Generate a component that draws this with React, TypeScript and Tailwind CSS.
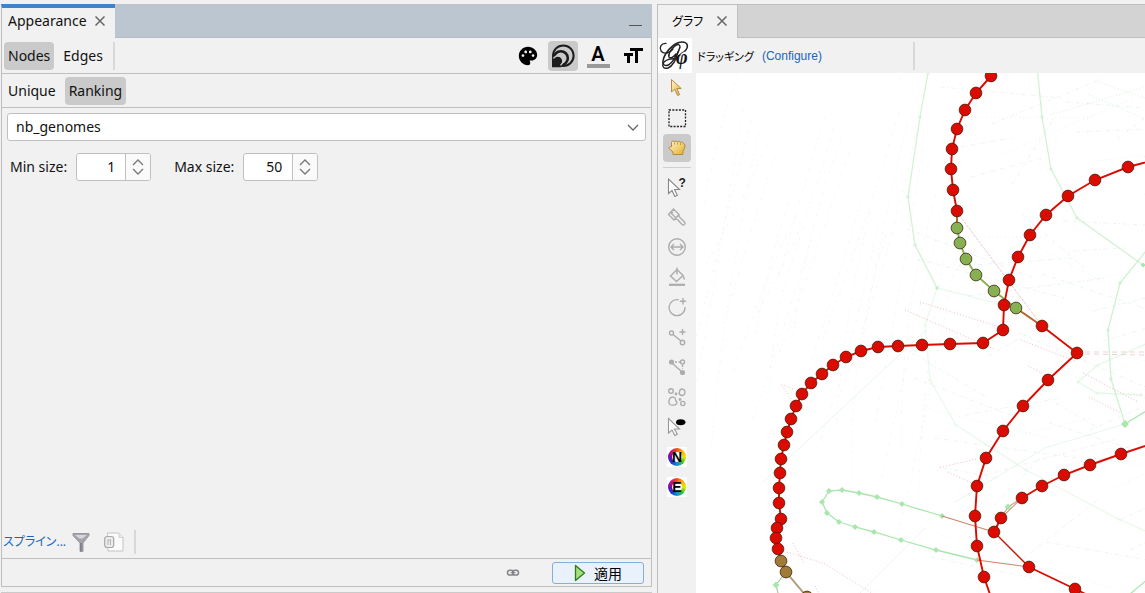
import { useState } from "react";
import type { ReactNode } from "react";
import { MdFormatSize, MdPalette } from "react-icons/md";

type Point = [number, number];

const RED = "#dc0b00";
const GREEN = "#85b150";
const BROWN = "#a17a35";
const PALE = "#a9e6ae";

const topRed: Point[] = [[991, 76], [976, 93], [965, 110], [957, 129], [952, 149], [951, 169], [953, 190], [957, 211]];
const topGreen: Point[] = [[957, 228], [960, 243], [966, 259], [976, 275], [994, 291], [1016, 308]];
const middleRed: Point[] = [
  [1042, 326], [1077, 353], [1048, 380], [1023, 406], [1003, 431], [986, 458],
  [977, 486], [975, 516], [977, 546], [984, 577], [993, 603],
];
const arcRed: Point[] = [
  [1162, 158], [1128, 167], [1095, 180], [1068, 196], [1046, 215], [1030, 235], [1018, 257], [1009, 280],
  [1004, 305], [1003, 330], [983, 343], [950, 344], [922, 345], [898, 346], [878, 347], [861, 351],
  [846, 357], [833, 365], [822, 374], [811, 383], [802, 394], [796, 406], [791, 419], [787, 432],
  [784, 445], [781, 459], [780, 473], [779, 488], [779, 503], [781, 519], [777, 528], [776, 538], [778, 549],
];
const tailBrown: Point[] = [[781, 561], [786, 572], [807, 597]];
const lowerRed: Point[] = [[1160, 441], [1121, 454], [1090, 465], [1064, 475], [1042, 486], [1022, 498]];
const lowerRedEnd: Point[] = [[1001, 518], [994, 532]];
const cornerRed: Point[] = [[1029, 567], [1075, 589], [1100, 601]];

const loopGreen: Point[] = [
  [942, 516], [902, 504], [877, 497], [859, 493], [842, 490], [829, 491], [822, 502], [827, 513],
  [839, 522], [855, 527], [874, 532], [901, 540], [936, 550], [977, 560],
];

const paleChains: { points: Point[]; opacity: number }[] = [
  { points: [[928, 73], [920, 117], [908, 197], [915, 245], [937, 288]], opacity: 0.5 },
  { points: [[937, 288], [925, 325], [930, 380], [956, 425], [1026, 470], [1118, 519], [1150, 533]], opacity: 0.22 },
  { points: [[1037, 66], [1042, 117], [1051, 169], [1077, 218], [1143, 265]], opacity: 0.5 },
  { points: [[1150, 246], [1120, 283], [1108, 330], [1111, 379], [1125, 424]], opacity: 0.55 },
  { points: [[1150, 342], [1098, 365], [1078, 382], [1097, 393], [1141, 395]], opacity: 0.28 },
  { points: [[1143, 265], [1160, 270]], opacity: 0.6 },
  { points: [[937, 288], [1004, 305]], opacity: 0.2 },
];

const redDotted: Point[][] = [
  [[905, 310], [994, 349]], [[920, 302], [1003, 328]], [[1021, 340], [1075, 361]], [[1028, 366], [1050, 377]],
  [[1083, 373], [1138, 402]], [[1089, 397], [1121, 413]], [[976, 459], [938, 468]], [[948, 472], [974, 484]],
  [[793, 389], [781, 384], [791, 399]], [[787, 552], [823, 563], [872, 593]], [[793, 543], [804, 563]], [[815, 586], [820, 596]],
];

// far away edges that only show up as faint hairlines
const leftHairlines = Array.from({ length: 26 }, (_, i) => {
  const x = 704 + ((i * 37) % 230);
  const y = 73 + ((i * 83) % 170);
  const len = 130 + ((i * 29) % 190);
  return `M${x + 34} ${y}q-${22 + (i % 5) * 4} ${len / 2} -${34 + (i % 4) * 14} ${len}`;
});
const rightHairlines = Array.from({ length: 56 }, (_, i) => {
  const x = 900 + ((i * 71) % 240);
  const y = 80 + ((i * 97) % 500);
  const dx = 40 + ((i * 31) % 110);
  const dy = ((i * 53) % 130) - 72;
  return `M${x} ${y}l${dx} ${dy}`;
});

const toPath = (points: Point[]) => "M" + points.map((p) => p.join(" ")).join("L");

function Chain({ points, color, edge }: { points: Point[]; color: string; edge?: string }) {
  return (
    <g>
      <path d={toPath(points)} fill="none" stroke={edge || color} strokeWidth="1.9" />
      {points.map(([x, y]) => (
        <circle key={`${x}-${y}`} cx={x} cy={y} r="5.9" fill={color} stroke="#3b1d10" strokeOpacity="0.75" strokeWidth="1" />
      ))}
    </g>
  );
}

function Diamond({ x, y, r }: { x: number; y: number; r: number }) {
  return <path d={`M${x - r} ${y}l${r} -${r}l${r} ${r}l-${r} ${r}z`} fill={PALE} />;
}

function GraphCanvas() {
  return (
    <svg className="block h-full w-full" role="img" aria-label="Graph">
      <g transform="translate(-696 -73)">
        <g fill="none" strokeWidth="1">
          {leftHairlines.map((d) => (
            <path key={d} d={d} stroke="#dfe9e4" strokeOpacity="0.35" strokeDasharray="3 3 1 4" />
          ))}
          {rightHairlines.map((d, i) => (
            <path key={d} d={d} stroke={i % 6 === 0 ? "#c5ebce" : "#d5e9dd"} strokeOpacity="0.45" strokeDasharray={i % 3 === 0 ? "1 3" : "4 2 1 3"} />
          ))}
          <path d="M1088 94L1145 119M1050 115L1145 87M1098 82L1145 98" stroke="#bfeac6" strokeOpacity="0.6" strokeDasharray="1 2" />
          <path d="M955 502L1045 448L1125 424M860 593L925 528M762 483L925 331" stroke="#d8f0e2" strokeOpacity="0.6" />
          {redDotted.map((points) => (
            <path key={toPath(points)} d={toPath(points)} stroke="#eba6a6" strokeOpacity="0.75" strokeDasharray="1 2" />
          ))}
          <path d="M957 212L1042 326" stroke="#eecaca" strokeDasharray="3 1" />
          <path d="M1085 352L1145 352M1085 354L1145 355" stroke="#f0d3d3" strokeDasharray="5 4" />
        </g>
        {paleChains.map(({ points, opacity }) => (
          <g key={toPath(points)} opacity={opacity}>
            <path d={toPath(points)} fill="none" stroke={PALE} strokeWidth="1.3" />
            {points.map(([x, y]) => (
              <Diamond key={`${x}-${y}`} x={x} y={y} r={2} />
            ))}
          </g>
        ))}
        <path d="M1125 424L1148 410M1130 594L1148 579" stroke={PALE} strokeWidth="1.3" />
        <Diamond x={1125} y={424} r={4} />
        <Diamond x={1143} y={265} r={2.5} />

        <path d={toPath(loopGreen)} fill="none" stroke={PALE} strokeWidth="1.3" />
        {loopGreen.map(([x, y]) => (
          <Diamond key={`${x}-${y}`} x={x} y={y} r={3} />
        ))}
        <g fill="none" strokeWidth="1.1">
          <path d="M942 516L994 532M977 560L1029 567" stroke="#cf8468" />
          <path d="M1022 498L1001 518M1022 498L1008 507L1001 518" stroke="#cf9a86" />
          <path d="M786 572L776 585L779 597" stroke="#a9c592" />
        </g>
        <Diamond x={1008} y={507} r={3.5} />
        <Diamond x={776} y={585} r={3.5} />

        <path d="M994 532L1029 567" stroke={RED} strokeWidth="1.3" />
        <path d="M957 211L957 228" stroke="#b5652b" strokeWidth="1.9" />
        <path d="M1016 308L1042 326" stroke="#b5652b" strokeWidth="1.9" />
        <path d="M778 549L781 561" stroke={BROWN} strokeWidth="1.9" />
        <Chain points={tailBrown} color={BROWN} edge="#b39a78" />
        <Chain points={topGreen} color={GREEN} />
        <Chain points={topRed} color={RED} />
        <Chain points={middleRed} color={RED} />
        <Chain points={arcRed} color={RED} />
        <Chain points={lowerRed} color={RED} />
        <Chain points={lowerRedEnd} color={RED} />
        <Chain points={cornerRed} color={RED} />
      </g>
    </svg>
  );
}

function CloseIcon() {
  return (
    <svg viewBox="0 0 10 10" className="size-2.5" fill="none" stroke="#666" strokeWidth="1.5">
      <path d="M.5.5l9 9M9.5.5l-9 9" />
    </svg>
  );
}

function SizeIcon() {
  return (
    <svg viewBox="0 0 24 24" className="size-6">
      <circle cx="12.3" cy="11.7" r="10.3" fill="none" stroke="#1c1c1c" strokeWidth="2" />
      <circle cx="9.8" cy="14.2" r="7" fill="none" stroke="#1c1c1c" strokeWidth="2.6" />
      <circle cx="6.8" cy="17" r="5" fill="#1c1c1c" stroke="#cacaca" strokeWidth="1.4" />
      <path d="M1 14v9.200h9.200L9 20 4 15z" fill="#1c1c1c" />
    </svg>
  );
}

function TextColorIcon() {
  return (
    <span className="flex w-[23px] flex-col items-center border-b-4 border-[#9a9a9a] font-['Roboto',sans-serif] text-[20px] leading-5 font-semibold text-black">
      A
    </span>
  );
}

function GephiLogo() {
  return (
    <svg viewBox="0 0 34 35" className="h-[35px] w-[34px] shrink-0 bg-white" role="img" aria-label="Gephi">
      <g fill="none" stroke="#222" strokeLinecap="round">
        <path d="M8 5.500C3 5 1 10 3 13c3 4 9 2 12-2" strokeWidth="1.300" />
        <path d="M27 13c4-4 3-9-3-9C15 4 6 16 5 23c-1 5 4 6 8 2 4-4 8-12 9-16 0-3-2-3-5-1-4 3-7 8-6 11 1 2 5 0 7-3" strokeWidth="1.500" />
        <path d="M20 14c-2 8-5 14-10 16-4 1-6-1-5-4 1-4 8-6 13-5" strokeWidth="1.400" />
        <path d="M27 13c-4 2-8 5-9 9" strokeWidth="1" />
      </g>
      <text x="18" y="26" fontFamily="Liberation Serif" fontStyle="italic" fontWeight="bold" fontSize="20" fill="#111">φ</text>
    </svg>
  );
}

function GoldGradient({ id }: { id: string }) {
  return (
    <linearGradient id={id} x1="0" y1="0" x2="1" y2="1">
      <stop offset="0" stopColor="#fff6cf" />
      <stop offset="1" stopColor="#e3af22" />
    </linearGradient>
  );
}

function ColorRing({ letter }: { letter: string }) {
  return (
    <span className="flex size-5 items-center justify-center bg-white">
      <span className="flex size-[18px] items-center justify-center rounded-full bg-[conic-gradient(#ff4a12,#ffb000,#e8e800,#3ac02c,#1090e0,#2030d0,#6a12b0,#d01080,#ff4a12)]">
        <span className="flex size-2.5 items-center justify-center rounded-full bg-white font-['Liberation_Sans'] text-[14px] leading-3 font-bold text-black">
          {letter}
        </span>
      </span>
    </span>
  );
}

function Glyph({ children }: { children: ReactNode }) {
  return (
    <svg viewBox="0 0 20 20" className="size-5" fill="none" stroke="#acacac" strokeWidth="1.4">
      {children}
    </svg>
  );
}

const tools: { name: string; icon: ReactNode; separated?: boolean }[] = [
  {
    name: "Direct selection",
    icon: (
      <Glyph>
        <defs><GoldGradient id="gold-cursor" /></defs>
        <path d="M4.500 1.500V14l3.200-2.800 2.900 6.300 2-.9-2.800-6.100h4.400z" fill="url(#gold-cursor)" stroke="#b08a50" strokeWidth="1" />
      </Glyph>
    ),
  },
  {
    name: "Rectangle selection",
    icon: <Glyph><path d="M2 2h16.500v16.500H2z" stroke="#222" strokeWidth="1.300" strokeDasharray="2 1.300" /></Glyph>,
  },
  {
    name: "Drag",
    icon: (
      <Glyph>
        <defs><GoldGradient id="gold-hand" /></defs>
        <path
          d="M4.500 4.500c.3-2 2.600-2 3-.3.5-1.500 2.700-1.500 3.100 0 .5-1.300 2.600-1.200 3 .3.7-1 2.800-.5 2.900 1.200.9 0 1.500.8 1.400 2-.2 2.500-1 4-2 5.800v3H6v-2.500C4.500 13 3.500 11.800 2.300 10.500c-.8-1 .2-2.300 2.300-1.700z"
          fill="url(#gold-hand)" stroke="#b3873c" strokeWidth="1"
        />
        <path d="M7.500 4.500v2M10.600 4.500v2M13.600 5v2" stroke="#b3873c" strokeWidth=".8" />
      </Glyph>
    ),
  },
  {
    name: "Edit node attributes",
    separated: true,
    icon: (
      <Glyph>
        <path d="M1.500 2v14.500l3.500-3 2.800 6 2.500-1.200-2.800-5.800h5z" fill="#fff" stroke="#888" strokeWidth="1.100" />
        <text x="11.500" y="10" fill="#222" stroke="none" fontFamily="Liberation Sans" fontWeight="bold" fontSize="12">?</text>
      </Glyph>
    ),
  },
  {
    name: "Painter",
    icon: <Glyph><path d="M1.500 7.500l5-5.500 5.500 5.500-5 5.500zM3.500 5.500l5.500 5.500M4 7l2-2M12 7.500c-.5 2 0 2.500 1.500 3.500l4 4c1.500 2-.8 4-2.500 2.500l-4-4.500c-1-1-2-1.500-4 0" /></Glyph>,
  },
  {
    name: "Sizer",
    icon: <Glyph><circle cx="10" cy="10" r="8.300" /><path d="M4 10h12M7 7l-3 3 3 3M13 7l3 3-3 3" /></Glyph>,
  },
  {
    name: "Brush",
    icon: <Glyph><path d="M10 2.500L3.500 9l6 5.500L16 8.500zM10 .5v7M16 8.500l1.500 4" /><path d="M2 17.800h16" strokeWidth="2.200" /></Glyph>,
  },
  {
    name: "Node pencil",
    icon: <Glyph><path d="M11.500 2.800A8 8 0 1 0 18 10M16 1v6.500M12.800 4.200h6.400" /></Glyph>,
  },
  {
    name: "Edge pencil",
    icon: <Glyph><circle cx="4.500" cy="6" r="2" /><circle cx="15.500" cy="15.500" r="2.200" /><path d="M6 7.500l8 6.500M15.500 2v6M12.500 5h6" /></Glyph>,
  },
  {
    name: "Shortest path",
    icon: (
      <Glyph>
        <circle cx="4.500" cy="5" r="2.600" fill="#acacac" stroke="none" />
        <circle cx="15.500" cy="15.500" r="2.600" fill="#acacac" stroke="none" />
        <circle cx="15.500" cy="5" r="2" />
        <path d="M5 6l10 9" /><path d="M8 5h5M15.500 8v4" strokeDasharray="2 1.500" />
      </Glyph>
    ),
  },
  {
    name: "Heat map",
    icon: (
      <Glyph>
        <circle cx="4" cy="4" r="2.300" /><circle cx="15.800" cy="16.500" r="2.100" />
        <circle cx="9" cy="7" r=".7" /><circle cx="13" cy="12.500" r=".7" />
        <path d="M12.500 5c0-3 2.500-3.500 3.800-2.500C18 3 18.500 5 17.500 7s-3 1.500-4 1S11.500 6.500 12.500 5zM4 10.500c2-1 5 0 4.500 2 0 1.500 2 2.500 1.300 4-1 2-5.500 2-7 1-1.800-1.500-1-6 1.200-7z" />
      </Glyph>
    ),
  },
  {
    name: "Label edition",
    icon: (
      <Glyph>
        <path d="M1.500 1.500v14.500l3.500-3 2.800 5.500 2.500-1.200-2.800-5.300h5z" fill="#fff" stroke="#999" strokeWidth="1.100" />
        <path d="M9 5.300c0-2 1.500-3 4.500-3s5 1 5 3-2 3-5 3-4.500-1-4.500-3z" fill="#000" stroke="none" />
      </Glyph>
    ),
  },
  { name: "Node colors", icon: <ColorRing letter="N" /> },
  { name: "Edge colors", icon: <ColorRing letter="E" /> },
];

function Spinner({ id, label, value, onChange }: { id: string; label: string; value: number; onChange: (v: number) => void }) {
  return (
    <div className="flex items-center gap-[9px]">
      <label htmlFor={id}>{label}</label>
      <div className="flex h-7 w-[75px] overflow-hidden rounded-[3px] border border-[#c0c0c0] bg-white">
        <input
          id={id}
          inputMode="numeric"
          value={value}
          onChange={(e) => onChange(Number(e.target.value) || 0)}
          className="w-0 flex-1 pr-2.5 text-right outline-none"
        />
        <div className="flex w-[25px] flex-col items-center border-l border-[#c0c0c0] bg-[#fafafa]">
          <button aria-label={`Increase ${label}`} onClick={() => onChange(value + 1)} className="flex flex-1 items-end pb-px">
            <svg viewBox="0 0 12 7" className="h-[7px] w-3" fill="none" stroke="#777" strokeWidth="1.3"><path d="M1 6l5-5 5 5" /></svg>
          </button>
          <button aria-label={`Decrease ${label}`} onClick={() => onChange(value - 1)} className="flex flex-1 items-start pt-px">
            <svg viewBox="0 0 12 7" className="h-[7px] w-3" fill="none" stroke="#777" strokeWidth="1.3"><path d="M1 1l5 5 5-5" /></svg>
          </button>
        </div>
      </div>
    </div>
  );
}

function AppearancePanel() {
  const [min, setMin] = useState(1);
  const [max, setMax] = useState(50);

  return (
    <section className="flex flex-1 flex-col border-b border-[#bfbfbf]">
      {/* Tab bar */}
      <div className="flex h-[34px] shrink-0">
        <div className="flex w-[114px] items-center gap-2 border-t-4 border-l border-t-[#4083c9] border-l-[#bfbfbf] pb-1 pl-1.5">
          <span>Appearance</span>
          <button aria-label="Close Appearance"><CloseIcon /></button>
        </div>
        <div className="flex flex-1 items-center justify-end border-b border-[#b4bcc4] bg-[#bbc6d1] pr-2.5">
          <button aria-label="Minimize" className="flex h-4 w-[13px] items-end">
            <span className="mb-[3px] h-px w-full bg-[#555]" />
          </button>
        </div>
      </div>

      <div className="flex flex-1 flex-col border-x border-[#bfbfbf]">
        {/* Element and attribute kind */}
        <div className="flex h-9 items-center border-b border-[#bfbfbf] pr-[3px] pl-0.5">
          <button className="h-7 rounded bg-[#cacaca] px-1">Nodes</button>
          <button className="ml-[5px] h-7 px-1">Edges</button>
          <div className="ml-1.5 h-7 w-0.5 bg-[#d8d8d8]" />
          <div className="ml-auto flex gap-[5px] text-black">
            <button aria-label="Color" className="flex size-[30px] items-center justify-center"><MdPalette className="size-[22px]" /></button>
            <button aria-label="Size" className="flex size-[30px] items-center justify-center rounded bg-[#cacaca]"><SizeIcon /></button>
            <button aria-label="Label color" className="flex size-[30px] items-center justify-center"><TextColorIcon /></button>
            <button aria-label="Label size" className="flex size-[30px] items-center justify-center"><MdFormatSize className="size-6" /></button>
          </div>
        </div>

        <div className="flex h-[34px] items-center border-b border-[#bfbfbf] pl-0.5">
          <button className="h-7 px-1">Unique</button>
          <button className="ml-[5px] h-7 rounded bg-[#cacaca] px-1">Ranking</button>
        </div>

        <div className="relative mx-[5px] mt-[5px]">
          <select aria-label="Attribute" className="h-7 w-full appearance-none rounded-[3px] border border-[#c0c0c0] bg-white px-2 outline-none">
            <option>nb_genomes</option>
          </select>
          <svg viewBox="0 0 12 7" className="pointer-events-none absolute top-[11px] right-[7px] h-[7px] w-3" fill="none" stroke="#666" strokeWidth="1.3">
            <path d="M1 1l5 5 5-5" />
          </svg>
        </div>

        <div className="mt-3 flex gap-[23px] pl-2">
          <Spinner id="min-size" label="Min size:" value={min} onChange={setMin} />
          <Spinner id="max-size" label="Max size:" value={max} onChange={setMax} />
        </div>

        {/* Footer */}
        <div className="mt-auto flex h-[34px] items-center border-b border-[#bfbfbf] px-px">
          <a href="#spline" className="font-['Noto_Sans','Noto_Sans_CJK_JP',sans-serif] text-[12px] text-[#1b67b4] [font-feature-settings:'palt']">
            スプライン...
          </a>
          <button aria-label="Filter" className="ml-[5px]">
            <svg viewBox="0 0 20 20" className="size-5">
              <path d="M2 1.500h16v2L12 11v8.500H9V11L2 3.500z" fill="#a4a4aa" stroke="#8c8c94" strokeWidth=".8" />
              <path d="M4 3h12l-4.500 3.500h-3z" fill="#d6d6dc" />
              <path d="M10 11v8" stroke="#67676f" strokeWidth="1" />
            </svg>
          </button>
          <button aria-label="Local scale" className="ml-[13px]">
            <svg viewBox="0 0 20 20" className="size-5">
              <path d="M3.500 1h11.500l4 4.500V19h-15z" fill="#fbfbfb" stroke="#c4c4c4" />
              <path d="M15 1v4.500h4" fill="#eee" stroke="#d0d0d0" />
              <rect x=".7" y="4.500" width="9" height="11" rx="2.500" fill="#ececec" stroke="#a8a8a8" strokeWidth="1.200" />
              <path d="M3.500 8h3.500M4 8v5M6.500 8v5" stroke="#b2b2b2" fill="none" />
            </svg>
          </button>
          <div className="ml-2.5 h-6 w-0.5 bg-[#d8d8d8]" />
        </div>
        <div className="flex h-[27px] items-center justify-end pr-[7px]">
          <button aria-label="Auto transformation" className="mr-8">
            <svg viewBox="0 0 14 8" className="h-2 w-3.5" fill="none" stroke="#85858b" strokeWidth="1.500">
              <rect x="1.500" y="1.300" width="6" height="4.800" rx="2.400" />
              <rect x="6.500" y="1.300" width="6" height="4.800" rx="2.400" />
              <path d="M4.500 3.700h5" strokeWidth="1" />
            </svg>
          </button>
          <button className="flex h-[22px] w-[92px] items-center justify-center gap-2 rounded-[3px] border border-[#86aed8] bg-[#e9f1fb]">
            <svg viewBox="0 0 12 18" className="h-[18px] w-3">
              <path d="M1.500 1.500v15L10.500 9z" fill="#a6e07c" stroke="#2c7c1c" strokeWidth="1.300" strokeLinejoin="round" />
            </svg>
            <span className="font-['Noto_Sans_CJK_JP',sans-serif] text-[14px] leading-5 text-black">適用</span>
          </button>
        </div>
      </div>
    </section>
  );
}

function GraphPanel() {
  const [active, setActive] = useState("Drag");

  return (
    <section className="flex min-w-0 flex-col border-l border-[#bfbfbf]">
      {/* Tab bar */}
      <div className="flex h-[34px] shrink-0 border-t border-[#bfbfbf]">
        <div className="flex w-20 items-center gap-3.5 border-r border-[#bfbfbf] pb-px pl-3.5">
          <span className="font-['Noto_Sans_CJK_JP',sans-serif] text-[12px] text-black [font-feature-settings:'palt']">グラフ</span>
          <button aria-label="Close グラフ"><CloseIcon /></button>
        </div>
        <div className="flex-1 border-b border-[#bfbfbf] bg-[#d3d3d3]" />
      </div>

      <div className="flex h-[35px] shrink-0 items-center">
        <GephiLogo />
        <div className="flex w-[221px] items-center gap-2 pl-[5px]">
          <span className="font-['Noto_Sans_CJK_JP',sans-serif] text-[11px] text-black [font-feature-settings:'palt']">ドラッギング</span>
          <a href="#configure" className="font-['Liberation_Sans',sans-serif] text-[12px] text-[#2166b8]">(Configure)</a>
        </div>
        <div className="h-7 w-0.5 bg-[#d8d8d8]" />
      </div>

      <div className="flex min-h-0 flex-1">
        {/* Toolbar */}
        <div className="flex w-[38px] shrink-0 flex-col gap-0.5 px-[5px] pt-px">
          {tools.map((tool) => (
            <div key={tool.name} className="flex flex-col gap-0.5">
              {tool.separated && <div className="my-[3px] h-px bg-[#cfcfcf]" />}
              <button
                aria-label={tool.name}
                onClick={() => setActive(tool.name)}
                className={`flex size-7 items-center justify-center rounded ${active === tool.name ? "bg-[#cacaca]" : ""}`}
              >
                {tool.icon}
              </button>
            </div>
          ))}
        </div>
        <div className="min-w-0 flex-1 overflow-hidden bg-white">
          <GraphCanvas />
        </div>
      </div>
    </section>
  );
}

export default function App() {
  return (
    <div className="grid h-screen grid-cols-[651fr_488fr] gap-[5px] bg-[#f1f1f1] pt-1 pl-px font-['Noto_Sans','Noto_Sans_CJK_JP',sans-serif] text-[14px] leading-5 text-[#111]">
      <div className="flex min-w-0 flex-col gap-[5px]">
        <AppearancePanel />
        <div className="h-px shrink-0 bg-[#cacaca]" />
      </div>
      <GraphPanel />
    </div>
  );
}
